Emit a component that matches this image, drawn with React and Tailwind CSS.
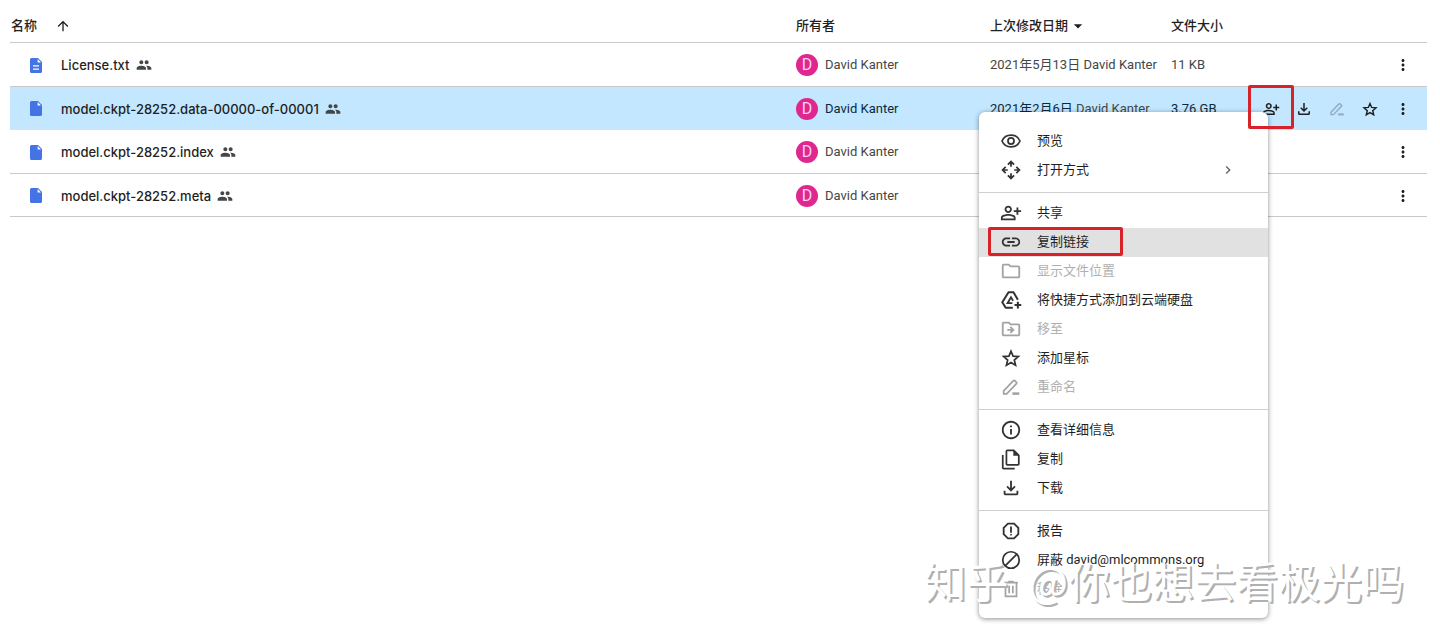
import {
  MdArrowDropDown,
  MdArrowUpward,
  MdChevronRight,
  MdInfoOutline,
  MdLink,
  MdMoreVert,
  MdOutlineDriveFileMove,
  MdOutlineFileDownload,
  MdOutlineFolder,
  MdOutlinePersonAddAlt,
  MdOutlineReport,
  MdPeople,
} from 'react-icons/md';

const files = [
  { name: 'License.txt', owner: 'David Kanter', date: '2021年5月13日', size: '11 KB', text: true },
  { name: 'model.ckpt-28252.data-00000-of-00001', owner: 'David Kanter', date: '2021年2月6日', size: '3.76 GB', selected: true },
  { name: 'model.ckpt-28252.index', owner: 'David Kanter' },
  { name: 'model.ckpt-28252.meta', owner: 'David Kanter' },
];

const menuGroups = [
  [
    { icon: EyeIcon, label: '预览' },
    { icon: OpenWithIcon, label: '打开方式', submenu: true },
  ],
  [
    { icon: MdOutlinePersonAddAlt, label: '共享' },
    { icon: MdLink, label: '复制链接', active: true },
    { icon: MdOutlineFolder, label: '显示文件位置', disabled: true },
    { icon: DriveAddIcon, label: '将快捷方式添加到云端硬盘' },
    { icon: MdOutlineDriveFileMove, label: '移至', disabled: true },
    { icon: StarIcon, label: '添加星标' },
    { icon: RenameIcon, label: '重命名', disabled: true },
  ],
  [
    { icon: MdInfoOutline, label: '查看详细信息' },
    { icon: CopyIcon, label: '复制' },
    { icon: MdOutlineFileDownload, label: '下载' },
  ],
  [
    { icon: MdOutlineReport, label: '报告' },
    { icon: BlockIcon, label: '屏蔽 david@mlcommons.org' },
    { icon: TrashIcon, label: '移除', disabled: true },
  ],
];

function LineIcon({ className, children }) {
  return (
    <svg viewBox="0 0 24 24" fill="none" stroke="currentColor" strokeWidth="1.9" className={className}>
      {children}
    </svg>
  );
}

function EyeIcon({ className }) {
  return (
    <LineIcon className={className}>
      <path d="M2.2 12C3.9 8 7.6 5.5 12 5.5S20.1 8 21.8 12C20.1 16 16.4 18.5 12 18.5S3.9 16 2.2 12Z" />
      <circle cx="12" cy="12" r="3.3" />
    </LineIcon>
  );
}

function OpenWithIcon({ className }) {
  return (
    <LineIcon className={className}>
      <path d="M12 2.8v5.7M8.6 6.2 12 2.8l3.4 3.4M12 21.2v-5.7M8.6 17.8l3.4 3.4 3.4-3.4M2.8 12h5.7M6.2 8.6 2.8 12l3.4 3.4M21.2 12h-5.7M17.8 8.6l3.4 3.4-3.4 3.4" />
    </LineIcon>
  );
}

function DriveAddIcon({ className }) {
  return (
    <LineIcon className={className}>
      <path d="M14 20.5H6.2L2.5 14.5 9.3 3.5h5.4l4.8 8.3" strokeWidth="2.2" strokeLinejoin="round" />
      <path d="M13.5 15.5H8.2L12 9l2.3 3.8" />
      <path d="M19.5 13.8v7.4M15.8 17.5h7.4" strokeWidth="2.2" />
    </LineIcon>
  );
}

function StarIcon({ className }) {
  return (
    <LineIcon className={className}>
      <path d="m12 4.6 2.25 5.3 5.75.5-4.36 3.78 1.31 5.62L12 16.82 7.05 19.8l1.31-5.62L4 10.4l5.75-.5Z" />
    </LineIcon>
  );
}

function RenameIcon({ className }) {
  return (
    <LineIcon className={className}>
      <path d="M4 19.5v-3.2L14.4 5.4a1.5 1.5 0 0 1 2.1 0l1.2 1.2a1.5 1.5 0 0 1 0 2.1L7.3 19.5Z" />
      <path d="M13.5 19.2H21" strokeWidth="2.8" />
    </LineIcon>
  );
}

function CopyIcon({ className }) {
  return (
    <LineIcon className={className}>
      <path d="M8 2.5h7L20.5 8v9.5a1 1 0 0 1-1 1H8a1 1 0 0 1-1-1v-14a1 1 0 0 1 1-1Z" strokeLinejoin="round" />
      <path d="M14.5 2.5v6h6Z" fill="currentColor" stroke="none" />
      <path d="M3 7.5v14a1 1 0 0 0 1 1h12" />
    </LineIcon>
  );
}

function BlockIcon({ className }) {
  return (
    <LineIcon className={className}>
      <circle cx="12" cy="12" r="9" />
      <path d="M5.6 18.4 18.4 5.6" />
    </LineIcon>
  );
}

function TrashIcon({ className }) {
  return (
    <LineIcon className={className}>
      <path d="M4.5 5h15M9 4h6M6 5v15h12V5M10 8.5v8M14 8.5v8" />
    </LineIcon>
  );
}

function FileIcon({ text }) {
  return (
    <svg viewBox="0 0 12 15" className="h-[15px] w-3">
      <path d="M1.5 0H8l4 4v9.5a1.5 1.5 0 0 1-1.5 1.5h-9A1.5 1.5 0 0 1 0 13.5v-12A1.5 1.5 0 0 1 1.5 0Z" fill="#4373e4" />
      <path d="M7.6 1v3.4H11Z" fill="#fff" />
      {text && <path d="M3 7.9h6M3 11.1h6" stroke="#fff" strokeWidth="1.4" />}
    </svg>
  );
}

function IconButton({ icon: Icon, label, disabled }) {
  return (
    <button type="button" aria-label={label} disabled={disabled} className="flex w-[33px] justify-center disabled:text-[#8fabbe]">
      <Icon className="size-[18px]" />
    </button>
  );
}

function FileRow({ file }) {
  const { name, owner, date, size, text, selected } = file;
  return (
    <tr className={`border-b odd:h-[44px] even:h-[43px] [&>td]:pt-0.5 ${selected ? 'border-[#c2e7ff] bg-[#c2e7ff] text-[#0b2a40]' : 'border-[#c9c9c9] text-[#444746]'}`}>
      <td>
        <div className="flex items-center pl-5">
          <FileIcon text={text} />
          <span className="ml-[19px] font-[Inter,sans-serif] font-medium text-[#1f1f1f]">{name}</span>
          <MdPeople className="ml-1.5 size-4 text-[#444746]" />
        </div>
      </td>
      <td>
        <div className="flex items-center gap-[7px]">
          <span className="flex size-[22px] items-center justify-center rounded-full bg-[#e0268f] text-base text-[#ffd3ee]">D</span>
          {owner}
        </div>
      </td>
      <td className="whitespace-nowrap">
        {date && (
          <>
            {date} <span className="text-[#444746]">{owner}</span>
          </>
        )}
      </td>
      <td>{size}</td>
      <td>
        <div className="flex justify-end pr-2 text-[#1f1f1f]">
          {selected && (
            <>
              <IconButton icon={MdOutlinePersonAddAlt} label="共享" />
              <IconButton icon={MdOutlineFileDownload} label="下载" />
              <IconButton icon={RenameIcon} label="重命名" disabled />
              <IconButton icon={StarIcon} label="添加星标" />
            </>
          )}
          <IconButton icon={MdMoreVert} label="更多操作" />
        </div>
      </td>
    </tr>
  );
}

function MenuItem({ item }) {
  const { icon: Icon, label, submenu, active, disabled } = item;
  return (
    <button
      type="button"
      role="menuitem"
      disabled={disabled}
      className={`flex h-[29px] w-full items-center pb-px pl-[21px] pr-8 text-left text-[#1f1f1f] disabled:text-[#b0b0b0] ${active ? 'bg-[#e1e1e1]' : ''}`}
    >
      <Icon className={`mr-[15px] size-[22px] ${disabled ? 'text-[#a3a3a3]' : 'text-[#333]'}`} />
      <span className="flex-1">{label}</span>
      {submenu && <MdChevronRight className="size-4 text-[#5f6368]" />}
    </button>
  );
}

function ContextMenu() {
  return (
    <div role="menu" className="absolute right-[172px] top-[112px] w-[289px] rounded-md bg-white py-[14px] shadow-[0_1px_5px_rgba(0,0,0,0.45)]">
      {menuGroups.map((group, i) => (
        <div key={i} className="mt-[7px] border-t border-[#cfcfcf] pt-[6px] first:mt-0 first:border-0 first:pt-px">
          {group.map((item) => (
            <MenuItem key={item.label} item={item} />
          ))}
        </div>
      ))}
    </div>
  );
}

export default function App() {
  return (
    <main className="relative min-h-screen overflow-hidden bg-white pl-[10px] pr-[13px] font-[Roboto,'Noto_Sans_CJK_SC',sans-serif] text-[13px] leading-5">
      <table className="w-full table-fixed border-collapse text-left">
        <thead>
          <tr className="h-[42px] border-b border-[#c9c9c9] text-[#1f1f1f]">
            <th className="font-medium">
              <div className="flex items-center gap-[18px] pl-px pt-2.5">
                名称
                <button type="button" aria-label="排序">
                  <MdArrowUpward className="size-4" />
                </button>
              </div>
            </th>
            <th className="w-[194px] pt-2.5 font-medium">所有者</th>
            <th className="w-[181px] font-medium">
              <button type="button" className="flex items-center pt-2.5">
                上次修改日期
                <MdArrowDropDown className="size-5" />
              </button>
            </th>
            <th className="w-[70px] whitespace-nowrap pt-2.5 font-medium">文件大小</th>
            <th className="w-[186px]" />
          </tr>
        </thead>
        <tbody>
          {files.map((file) => (
            <FileRow key={file.name} file={file} />
          ))}
        </tbody>
      </table>

      <ContextMenu />

      {/* Highlight frames */}
      <div className="pointer-events-none absolute right-[146px] top-[85px] h-[44px] w-[46px] rounded-xs border-[3px] border-[#d8222a]" />
      <div className="pointer-events-none absolute right-[317px] top-[227px] h-[29px] w-[135px] rounded-xs border-[3px] border-[#d8222a]" />

      {/* Watermark */}
      <p className="pointer-events-none absolute right-[36px] top-[556px] flex gap-5 whitespace-nowrap font-['Noto_Sans_CJK_SC',sans-serif] text-[42px] leading-[48px] text-white [text-shadow:2px_2px_0_#b0b0b0]">
        <span>知乎</span>
        <span>@你也想去看极光吗</span>
      </p>
    </main>
  );
}
